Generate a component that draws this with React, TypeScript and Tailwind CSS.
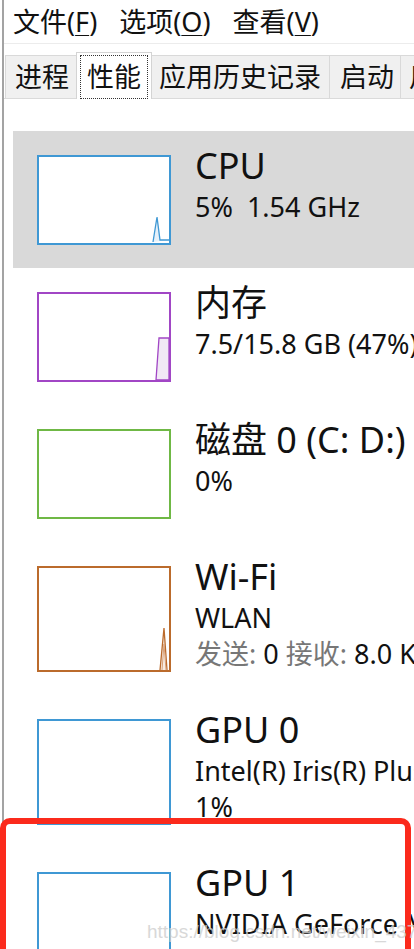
import React from "react";

const FONT = "font-['Noto_Sans','Noto_Sans_CJK_SC',sans-serif]";

function Row({
  color,
  title,
  lines,
  active,
  chart,
}: {
  color: string;
  title: string;
  lines: React.ReactNode[];
  active?: boolean;
  chart?: React.ReactNode;
}) {
  return (
    <div className={`flex pl-[24px] pt-[24px] pb-[23px] gap-[24px] ${active ? "bg-[#d9d9d9]" : ""}`}>
      <div
        className="relative w-[134px] min-h-[90px] shrink-0 border-2 bg-white"
        style={{ borderColor: color }}
      >
        {chart}
      </div>
      <div className="flex flex-col min-w-0 whitespace-pre">
        <div className="-mt-[12px] text-[36px] leading-[46px] text-[#111]">{title}</div>
        {lines.map((l, i) => (
          <div key={i} className="text-[27px] leading-[36px] text-[#111]">
            {l}
          </div>
        ))}
      </div>
    </div>
  );
}

export default function App() {
  return (
    <div className={`relative w-[414px] h-[949px] overflow-hidden bg-white flex ${FONT}`}>
      <div className="w-[2px] shrink-0 bg-white" />
      <div className="w-[2px] shrink-0 bg-[#a3a3a3]" />
      <div className="flex-1 min-w-0 flex flex-col">
        {/* menu */}
        <div className="h-[44px] shrink-0 border-b border-[#ececec] flex items-center pl-[9px] pt-[2px] gap-[22px] text-[27px] text-[#111] whitespace-nowrap">
          <span>
            文件(<span className="underline underline-offset-[3px] decoration-1">F</span>)
          </span>
          <span>
            选项(<span className="underline underline-offset-[3px] decoration-1">O</span>)
          </span>
          <span>
            查看(<span className="underline underline-offset-[3px] decoration-1">V</span>)
          </span>
        </div>
        {/* tabs */}
        <div className="h-[55px] shrink-0 flex items-end pl-[1px] border-b border-[#dadada] whitespace-nowrap text-[27px] text-[#111]">
          <div className="h-[43px] flex items-center pl-[9px] pr-[8px] border border-b-0 border-[#d9d9d9] bg-[#f0f0f0]">进程</div>
          <div className="relative z-10 -mx-[2px] -mb-px h-[47px] flex items-center px-[3px] bg-white border border-b-0 border-[#d4d4d4]">
            <div className="h-[44px] mt-[2px] flex items-center px-[6px] border border-dotted border-[#333]">性能</div>
          </div>
          <div className="h-[43px] flex items-center px-[8px] border border-b-0 border-[#d9d9d9] bg-[#f0f0f0]">应用历史记录</div>
          <div className="-ml-px h-[43px] flex items-center pl-[10px] pr-[6px] border border-b-0 border-[#d9d9d9] bg-[#f0f0f0]">启动</div>
          <div className="-ml-px h-[43px] flex items-center px-[8px] border border-b-0 border-[#d9d9d9] bg-[#f0f0f0]">用户</div>
          <div className="-ml-px h-[43px] flex items-center px-[8px] border border-b-0 border-[#d9d9d9] bg-[#f0f0f0]">详细信息</div>
        </div>
        {/* content */}
        <div className="pl-[9px] pt-[32px] flex flex-col">
          <Row
            active
            color="#3f98d4"
            title="CPU"
            lines={["5%  1.54 GHz"]}
            chart={
              <svg className="absolute right-0 bottom-0" width="20" height="32" viewBox="0 0 20 32">
                <polyline
                  points="4,31 8,6 11,29 20,29"
                  fill="#e6f1fa"
                  stroke="#3f98d4"
                  strokeWidth="1.3"
                />
              </svg>
            }
          />
          <Row
            color="#a146c5"
            title="内存"
            lines={["7.5/15.8 GB (47%)"]}
            chart={
              <svg className="absolute right-0 bottom-0" width="16" height="44" viewBox="0 0 16 44">
                <polygon points="3,44 6,2 16,2 16,44" fill="#f1e9f5" stroke="#a146c5" strokeWidth="1.3" />
              </svg>
            }
          />
          <Row color="#6fb845" title="磁盘 0 (C: D:)" lines={["0%"]} />
          <Row
            color="#bb6b2c"
            title="Wi-Fi"
            lines={[
              "WLAN",
              <span>
                <span className="text-[#777]">发送:</span> 0 <span className="text-[#777]">接收:</span> 8.0 Kbps
              </span>,
            ]}
            chart={
              <svg className="absolute right-0 bottom-0" width="14" height="46" viewBox="0 0 14 46">
                <polyline points="5,46 9,4 12,46" fill="#f7ece2" stroke="#bb6b2c" strokeWidth="1.3" />
                <polyline points="7,46 9,20 11,46" fill="none" stroke="#d9a27a" strokeWidth="1" />
              </svg>
            }
          />
          <Row color="#3f98d4" title="GPU 0" lines={["Intel(R) Iris(R) Plus Graphics", "1%"]} />
          <Row color="#3f98d4" title="GPU 1" lines={["NVIDIA GeForce MX350", "0%"]} />
        </div>
      </div>
      {/* annotation box */}
      <div className="absolute left-0 top-[818px] w-[411px] h-[200px] border-[6px] border-[#fb2a1c] rounded-[10px] pointer-events-none" />
      <div className="absolute left-[147px] top-[918px] text-[19px] text-[#cfcfcf] opacity-80 whitespace-nowrap font-['Liberation_Sans',sans-serif] pointer-events-none">
        https://blog.csdn.net/weixin_43726596
      </div>
    </div>
  );
}
